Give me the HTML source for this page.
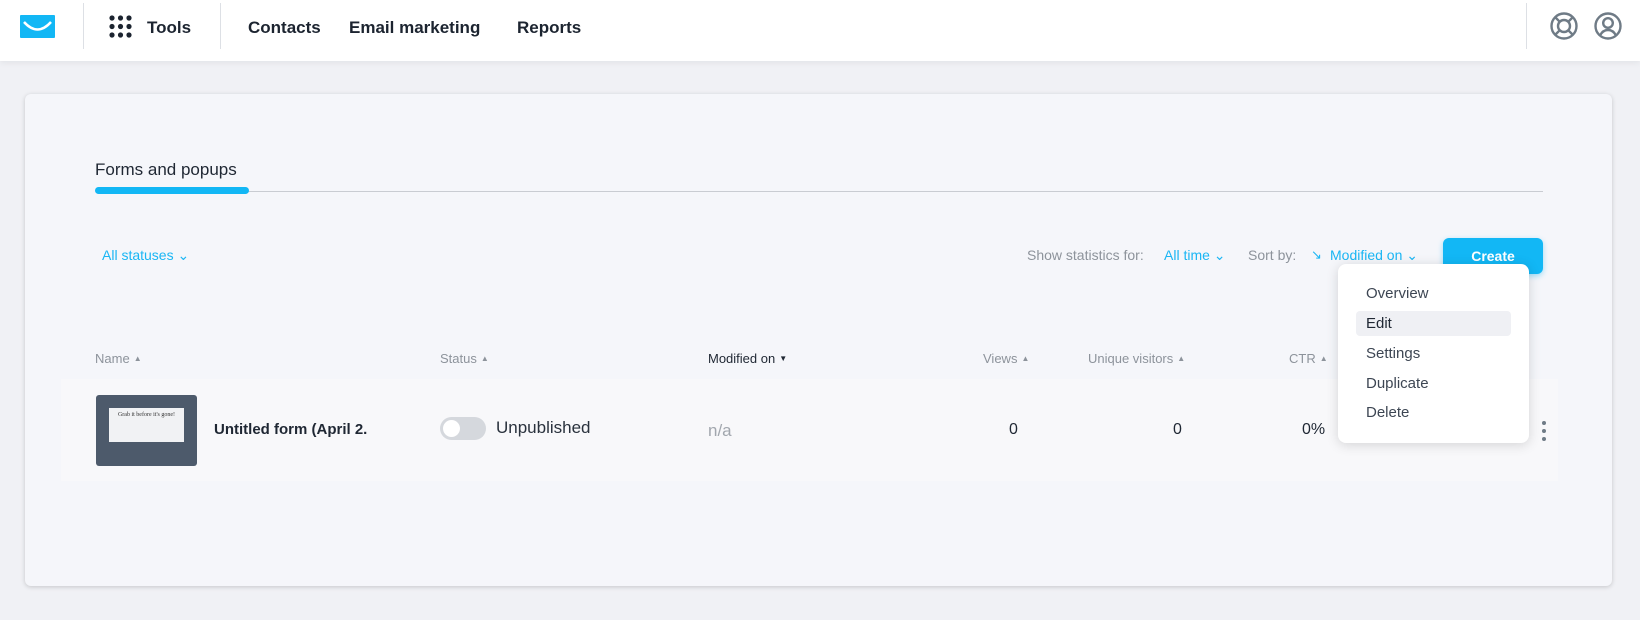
<!DOCTYPE html>
<html><head><meta charset="utf-8"><style>
*{margin:0;padding:0;box-sizing:border-box}
body{width:1640px;height:620px;background:#f0f1f5;font-family:"Liberation Sans",sans-serif;position:relative;overflow:hidden;color:#1f2733}
.a{position:absolute;white-space:nowrap}
.nav{position:absolute;left:0;top:0;width:1640px;height:61px;background:#fff;box-shadow:0 2px 6px rgba(0,0,0,.06)}
.nv{font-size:17px;font-weight:bold;color:#1c2430;top:18px}
.sep{position:absolute;top:3px;width:1px;height:46px;background:#dde0e5}
.card{position:absolute;left:25px;top:94px;width:1587px;height:492px;background:#f5f6fa;border-radius:6px;box-shadow:0 1px 5px rgba(0,0,0,.18)}
.blue{color:#1ab6f4}
.h{font-size:13px;color:#8d939b;top:351px}
.tri{font-size:8px;vertical-align:2px;margin-left:4px}
.mi{font-size:15px;color:#3d4653;left:1366px}
</style></head><body>
<div class="nav">
<svg class="a" style="left:20px;top:15px" width="35" height="23" viewBox="0 0 35 23"><rect width="35" height="23" rx="1" fill="#12b7f5"/><path d="M4 7 Q17.5 22 31 7" stroke="#fff" stroke-width="2.5" fill="none"/></svg>
<div class="sep" style="left:83px"></div>
<svg class="a" style="left:109px;top:15px" width="23" height="23"><g fill="#1c2430"><circle cx="3" cy="3" r="2.6"/><circle cx="11.5" cy="3" r="2.6"/><circle cx="20" cy="3" r="2.6"/><circle cx="3" cy="11.5" r="2.6"/><circle cx="11.5" cy="11.5" r="2.6"/><circle cx="20" cy="11.5" r="2.6"/><circle cx="3" cy="20" r="2.6"/><circle cx="11.5" cy="20" r="2.6"/><circle cx="20" cy="20" r="2.6"/></g></svg>
<div class="a nv" style="left:147px">Tools</div>
<div class="sep" style="left:220px"></div>
<div class="a nv" style="left:248px">Contacts</div>
<div class="a nv" style="left:349px">Email marketing</div>
<div class="a nv" style="left:517px">Reports</div>
<div class="sep" style="left:1526px"></div>
<svg class="a" style="left:1549px;top:11px" width="30" height="30" viewBox="0 0 30 30" fill="none" stroke="#6f7b86" stroke-width="2.4"><circle cx="15" cy="15" r="12.5"/><circle cx="15" cy="15" r="6"/><path d="M6.5 6.5l4.3 4.3M23.5 6.5l-4.3 4.3M6.5 23.5l4.3-4.3M23.5 23.5l-4.3-4.3"/></svg>
<svg class="a" style="left:1593px;top:11px" width="30" height="30" viewBox="0 0 30 30" fill="none" stroke="#6f7b86" stroke-width="2.4"><circle cx="15" cy="15" r="12.5"/><circle cx="15" cy="12" r="4.8"/><path d="M7 24.5c2-4 5-5.5 8-5.5s6 1.5 8 5.5"/></svg>
</div>
<div class="card"></div>
<div class="a" style="left:95px;top:160px;font-size:17px;color:#1f2733">Forms and popups</div>
<div class="a" style="left:248px;top:191px;width:1295px;height:1px;background:#c9ccd2"></div>
<div class="a" style="left:95px;top:187px;width:154px;height:7px;border-radius:4px;background:#12b7f5"></div>
<div class="a blue" style="left:102px;top:247px;font-size:14px">All statuses ⌄</div>
<div class="a" style="left:1027px;top:247px;font-size:14px;color:#8d939b">Show statistics for:</div>
<div class="a blue" style="left:1164px;top:247px;font-size:14px">All time ⌄</div>
<div class="a" style="left:1248px;top:247px;font-size:14px;color:#8d939b">Sort by:</div>
<div class="a blue" style="left:1311px;top:247px;font-size:13px">↘</div>
<div class="a blue" style="left:1330px;top:247px;font-size:14px">Modified on ⌄</div>
<div class="a" style="left:1443px;top:238px;width:100px;height:36px;border-radius:6px;background:#12b7f5;color:#fff;font-weight:bold;font-size:14px;text-align:center;line-height:36px;box-shadow:0 2px 6px rgba(18,183,245,.4)">Create</div>
<div class="a h" style="left:95px">Name<span class="tri">▲</span></div>
<div class="a h" style="left:440px">Status<span class="tri">▲</span></div>
<div class="a h" style="left:708px;color:#1f2733">Modified on<span class="tri">▼</span></div>
<div class="a h" style="left:983px">Views<span class="tri">▲</span></div>
<div class="a h" style="left:1088px">Unique visitors<span class="tri">▲</span></div>
<div class="a h" style="left:1289px">CTR<span class="tri">▲</span></div>
<div class="a" style="left:61px;top:379px;width:1497px;height:102px;background:#f8f8fa"></div>
<div class="a" style="left:96px;top:395px;width:101px;height:71px;background:#4d5a6b;border-radius:3px"><div style="position:absolute;left:13px;top:13px;width:75px;height:34px;background:#f1f2f4;font-family:'Liberation Serif',serif;font-size:6px;text-align:center;padding-top:4px;color:#333">Grab it before it's gone!</div></div>
<div class="a" style="left:214px;top:421px;font-size:15px;font-weight:bold;color:#1f2733">Untitled form (April 2.</div>
<div class="a" style="left:440px;top:417px;width:46px;height:23px;border-radius:12px;background:#d5d8dd"><div style="position:absolute;left:3px;top:3px;width:17px;height:17px;border-radius:50%;background:#fff"></div></div>
<div class="a" style="left:496px;top:418px;font-size:17px;color:#2a323d">Unpublished</div>
<div class="a" style="left:708px;top:421px;font-size:17px;color:#a2a7ae">n/a</div>
<div class="a" style="left:1009px;top:421px;font-size:16px">0</div>
<div class="a" style="left:1173px;top:421px;font-size:16px">0</div>
<div class="a" style="left:1302px;top:421px;font-size:16px">0%</div>
<svg class="a" style="left:1541px;top:420px" width="6" height="22"><g fill="#6f7b86"><circle cx="3" cy="3" r="2"/><circle cx="3" cy="11" r="2"/><circle cx="3" cy="19" r="2"/></g></svg>
<div class="a" style="left:1338px;top:264px;width:191px;height:179px;background:#fff;border-radius:8px;box-shadow:0 2px 12px rgba(0,0,0,.15)"></div>
<div class="a" style="left:1356px;top:311px;width:155px;height:25px;background:#eff0f4;border-radius:4px"></div>
<div class="a mi" style="top:285px">Overview</div>
<div class="a mi" style="top:315px;color:#1f2733">Edit</div>
<div class="a mi" style="top:345px">Settings</div>
<div class="a mi" style="top:375px">Duplicate</div>
<div class="a mi" style="top:404px">Delete</div>
</body></html>
